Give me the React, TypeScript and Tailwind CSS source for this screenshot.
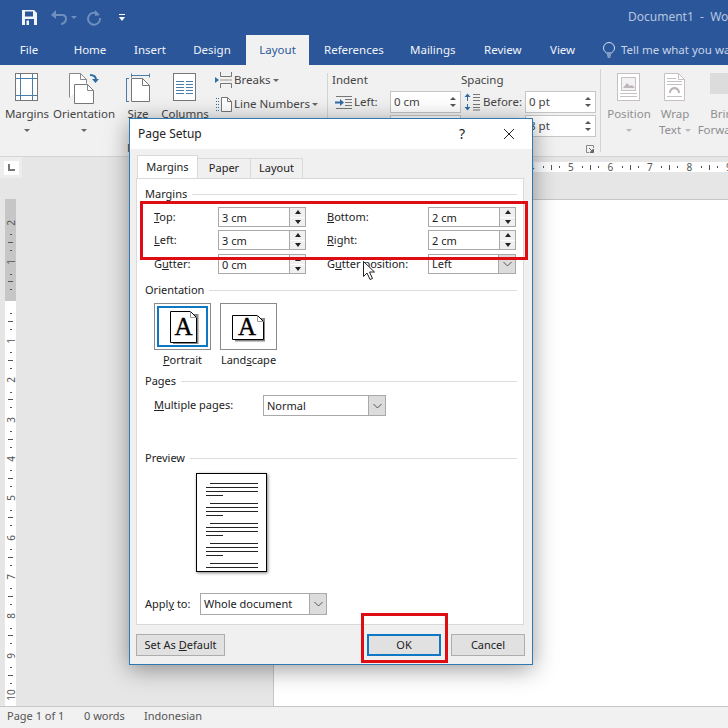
import React from "react";

const Caret = ({ className = "" }: { className?: string }) => (
  <span className={`inline-block w-0 h-0 border-x-[3px] border-x-transparent border-t-[3px] border-t-[#666] ${className}`} />
);

const RibbonButton = ({
  width,
  label,
  label2,
  disabled,
  children,
}: {
  width: string;
  label: string;
  label2?: string;
  disabled?: boolean;
  children: React.ReactNode;
}) => (
  <div className={`${width} shrink-0 flex flex-col items-center ${disabled ? "text-[#8f8f8f]" : "text-[#444]"}`}>
    <div className="h-[32px] flex items-start justify-center">{children}</div>
    <div className="h-[18px] leading-[18px] whitespace-nowrap">{label}</div>
    <div className="h-[14px] leading-[14px] whitespace-nowrap flex items-center justify-center gap-1">
      {label2}
      <Caret className={disabled ? "opacity-40" : ""} />
    </div>
  </div>
);

const MarginsIcon = () => (
  <svg width="24" height="29" viewBox="0 0 24 29" fill="none">
    <rect x="0.5" y="0.5" width="22" height="27" fill="#fff" stroke="#777" />
    <path d="M5.5 1v26M17.5 1v26M1 5.5h21M1 22.5h21" stroke="#4a7ea8" />
  </svg>
);

const OrientationIcon = () => (
  <svg width="30" height="31" viewBox="0 0 30 31" fill="none">
    <path d="M0.5 24.5v-24h11l6 6v4" stroke="#888" fill="#fff" />
    <path d="M5.5 11.5h13l6 6v13h-19z" fill="#fff" stroke="#777" />
    <path d="M18.5 11.5v6h6M11.5 .5v6h6" stroke="#888" />
    <path d="M21 2c4 0 6 2 6 5" stroke="#2f6da4" strokeWidth="2" />
    <path d="M23 6h7l-3.500 4z" fill="#2f6da4" />
  </svg>
);

const SizeIcon = () => (
  <svg width="25" height="29" viewBox="0 0 25 29" fill="none">
    <path d="M5.5 2.500h18M5.500 .5v4M23.500 .5v4M.5 5v24M0 5.500h3M0 28.500h3" stroke="#4a7ea8" />
    <path d="M5.500 5.500h11l7 7v16h-18z" fill="#fff" stroke="#777" />
    <path d="M16.500 5.500v7h7" stroke="#777" />
  </svg>
);

const ColumnsIcon = () => (
  <svg width="24" height="29" viewBox="0 0 24 29" fill="none">
    <rect x="0.5" y="0.5" width="22" height="27" fill="#fff" stroke="#777" />
    <path d="M3 8.500h8M13 8.500h7M3 11.500h8M13 11.500h7M3 14.500h8M13 14.500h7M3 17.500h8M13 17.500h7M3 20.500h8M13 20.500h7" stroke="#4a7ea8" />
  </svg>
);

const BreaksIcon = () => (
  <svg width="17" height="16" viewBox="0 0 17 16" fill="none">
    <path d="M5.500 0v4.500h11V0M5.500 16v-4.500h11V16" stroke="#777" />
    <path d="M5 8h12" stroke="#999" />
    <path d="M0 5l4 3-4 3z" fill="#2f6da4" />
  </svg>
);

const LineNumbersIcon = () => (
  <svg width="17" height="15" viewBox="0 0 17 15" fill="none">
    <path d="M1 1.500h3M1 4.500h3M1 7.500h3M1 10.500h3M1 13.500h3" stroke="#2f6da4" strokeDasharray="1 1" />
    <path d="M6.500 .5h6l4 4v10h-10z" fill="#fff" stroke="#777" />
    <path d="M12.500 .5v4h4" stroke="#777" />
  </svg>
);

const IndentIcon = () => (
  <svg width="17" height="13" viewBox="0 0 17 13" fill="none">
    <path d="M0 6.500h6" stroke="#2f6da4" strokeWidth="2" />
    <path d="M5 3l4 3.500L5 10z" fill="#2f6da4" />
    <path d="M1 .5h16M10 3.500h7M10 6.500h7M10 9.500h7M1 12.500h16" stroke="#777" />
  </svg>
);

const SpacingIcon = () => (
  <svg width="16" height="18" viewBox="0 0 16 18" fill="none">
    <path d="M3.500 3v5M3.500 11v5" stroke="#2f6da4" />
    <path d="M0.500 4l3-3.500 3 3.500zM0.500 14l3 3.500 3-3.500z" fill="#2f6da4" />
    <path d="M9 1.500h7M9 4.500h7M9 7.500h7M9 11.500h7M9 14.500h7M9 17h7" stroke="#777" />
  </svg>
);

const PositionIcon = () => (
  <svg width="24" height="28" viewBox="0 0 24 28" fill="none">
    <rect x="0.5" y="0.5" width="22" height="27" fill="#fff" stroke="#c6bfc4" />
    <rect x="4.5" y="4.5" width="14" height="13" fill="#f4f1f3" stroke="#c6bfc4" />
    <path d="M6 15l4-5 3 3 2-1 3 3z" fill="#bdb5bb" />
    <path d="M3 20.500h17M3 23.500h17" stroke="#c6bfc4" />
  </svg>
);

const WrapIcon = () => (
  <svg width="22" height="28" viewBox="0 0 22 28" fill="none">
    <path d="M.5 .5h14l6 6v21H.5z" fill="#fff" stroke="#c6bfc4" />
    <path d="M14.500 .5v6h6M3 5.500h9M3 8.500h15M3 11.500h15M3 23.500h15" stroke="#c6bfc4" />
    <path d="M5 20c0-8 11-8 11 0h-2c0-5-7-5-7 0z" fill="#bdb5bb" />
  </svg>
);

const MiniSpin = () => (
  <span className="w-[14px] flex flex-col items-center gap-[4px]">
    <span className="w-0 h-0 border-x-[3px] border-x-transparent border-b-[3px] border-b-[#555]" />
    <span className="w-0 h-0 border-x-[3px] border-x-transparent border-t-[3px] border-t-[#555]" />
  </span>
);

const RulerMark = ({ kind }: { kind: "dot" | "tick" }) => (
  <span className={kind === "dot" ? "w-px h-[2px] bg-[#555]" : "w-px h-[5px] bg-[#555]"} />
);

const HRulerCell = ({ n }: { n: number }) => (
  <div className="w-[39.5px] shrink-0 flex items-center justify-around text-[10px] leading-none text-[#555]">
    <span className="w-[9px] text-center">{n}</span>
    <RulerMark kind="dot" />
    <RulerMark kind="tick" />
    <RulerMark kind="dot" />
  </div>
);

const VRulerCell = ({ n }: { n: number | null }) => (
  <div className="h-[39.33px] shrink-0 flex flex-col items-center justify-around text-[10px] leading-none text-[#555]">
    <span className="h-[9px] flex items-center justify-center">
      {n !== null && <span className="-rotate-90 inline-block">{n}</span>}
    </span>
    <span className="h-px w-[2px] bg-[#555]" />
    <span className="h-px w-[5px] bg-[#555]" />
    <span className="h-px w-[2px] bg-[#555]" />
  </div>
);

const SectionHeading = ({ title, className = "" }: { title: string; className?: string }) => (
  <div className={`h-4 flex items-center gap-[5px] ${className}`}>
    <span className="leading-4">{title}</span>
    <span className="flex-1 border-t border-[#dcdcdc]" />
  </div>
);

const Spinner = ({ value, className = "" }: { value: string; className?: string }) => (
  <div className={`w-[88px] h-5 border border-[#a9a9a9] bg-white flex items-center ${className}`}>
    <span className="flex-1 pl-[3px] leading-none">{value}</span>
    <div className="w-4 h-full flex flex-col border-l border-[#a9a9a9] gap-px bg-white">
      <span className="flex-1 bg-[#f0f0f0] flex items-center justify-center">
        <span className="w-0 h-0 border-x-[3.5px] border-x-transparent border-b-[4px] border-b-[#222]" />
      </span>
      <span className="flex-1 bg-[#f0f0f0] flex items-center justify-center">
        <span className="w-0 h-0 border-x-[3.5px] border-x-transparent border-t-[4px] border-t-[#222]" />
      </span>
    </div>
  </div>
);

const Select = ({ value, className = "" }: { value: string; className?: string }) => (
  <div className={`border border-[#a9a9a9] bg-white flex items-center ${className}`}>
    <span className="flex-1 pl-[3px] pb-px leading-none">{value}</span>
    <span className="w-[17px] h-full bg-[#dcdcdc] border-l border-[#a9a9a9] flex items-center justify-center">
      <svg width="9" height="6" viewBox="0 0 9 6" fill="none">
        <path d="M.5 1l4 4 4-4" stroke="#555" />
      </svg>
    </span>
  </div>
);

const OrientationButton = ({ landscape, selected }: { landscape?: boolean; selected?: boolean }) => (
  <div className="w-[57px] h-[47px] border border-[#8a8a8a] bg-white flex items-center justify-center relative">
    {selected && <span className="absolute inset-[2px] border-2 border-[#0f78c4]" />}
    <svg width="34" height="34" viewBox="0 0 34 34" fill="none">
      {landscape ? (
        <>
          <path d="M3 8h30v23.500H3z" fill="#888" />
          <path d="M.5 5.500h25l6 6v18H.5z" fill="#fff" stroke="#000" />
          <path d="M25.500 5.500v6h6" stroke="#999" />
          <text x="15" y="24.500" textAnchor="middle" fontFamily="Liberation Serif, serif" fontSize="25" fill="#000" stroke="#000" strokeWidth="0.4">
            A
          </text>
        </>
      ) : (
        <>
          <path d="M7 4h25.500v30H7z" fill="#888" />
          <path d="M4.500 1.500h20l6 6v25h-26z" fill="#fff" stroke="#000" />
          <path d="M24.500 1.500v6h6" stroke="#999" />
          <text x="17.500" y="24.500" textAnchor="middle" fontFamily="Liberation Serif, serif" fontSize="25" fill="#000" stroke="#000" strokeWidth="0.4">
            A
          </text>
        </>
      )}
    </svg>
  </div>
);

const PreviewLines = () => {
  const rows: React.ReactNode[] = [];
  for (let g = 0; g < 5; g++) {
    const lines = g === 4 ? ["ml-[13px] w-12", "ml-[9px] w-[52px]"] : ["ml-[13px] w-12", "ml-[9px] w-[52px]", "ml-[9px] w-[52px]", "ml-[9px] w-[17px]"];
    rows.push(
      <div key={g} className={`flex flex-col gap-[3px] ${g === 4 ? "" : "mb-[7px]"}`}>
        {lines.map((w, i) => (
          <span key={i} className={`h-px bg-[#222] ${w}`} />
        ))}
      </div>
    );
  }
  return <>{rows}</>;
};

const PageSetupDialog = () => (
  <div className="absolute left-[129px] top-[118px] w-[404px] h-[547px] border border-[#2e79b5] bg-[#f0f0f0] shadow-[0_4px_22px_rgba(0,0,0,0.4)] flex flex-col text-[#222] text-[11px] z-10">
    <div className="h-[30px] shrink-0 bg-white flex items-center pl-2 text-[12px]">
      <span className="flex-1">Page Setup</span>
      <span className="mr-[38px] text-[14px] leading-none">?</span>
      <svg width="12" height="12" viewBox="0 0 12 12" className="mr-[17px]" fill="none">
        <path d="M1 1l10 10M11 1L1 11" stroke="#222" />
      </svg>
    </div>
    <div className="flex-1 px-[6px] pt-[7px] flex flex-col">
      <div className="flex h-[22px] items-end">
        <div className="w-[61px] h-[23px] bg-white border border-b-0 border-[#d9d9d9] flex items-center justify-center z-10 ml-px">Margins</div>
        <div className="w-[53px] h-5 bg-[#f0f0f0] border border-l-0 border-b-0 border-[#d9d9d9] flex items-center justify-center">Paper</div>
        <div className="w-[52px] h-5 bg-[#f0f0f0] border border-l-0 border-b-0 border-[#d9d9d9] flex items-center justify-center">Layout</div>
      </div>
      <div className="w-[388px] h-[447px] bg-white border border-[#d9d9d9] pl-2 pr-[6px] pt-[7px] flex flex-col">
        <SectionHeading title="Margins" />
        <div className="ml-[9px] mt-[5px] flex items-center">
          <span className="w-16"><u>T</u>op:</span>
          <Spinner value="3 cm" />
          <span className="w-[122px] pl-[21px]"><u>B</u>ottom:</span>
          <Spinner value="2 cm" />
        </div>
        <div className="ml-[9px] mt-[3px] flex items-center">
          <span className="w-16"><u>L</u>eft:</span>
          <Spinner value="3 cm" />
          <span className="w-[122px] pl-[21px]"><u>R</u>ight:</span>
          <Spinner value="2 cm" />
        </div>
        <div className="ml-[9px] mt-1 flex items-center">
          <span className="w-16">G<u>u</u>tter:</span>
          <Spinner value="0 cm" />
          <span className="w-[122px] pl-[21px] whitespace-nowrap">G<u>u</u>tter position:</span>
          <Select value="Left" className="w-[88px] h-5" />
        </div>
        <SectionHeading title="Orientation" className="mt-2" />
        <div className="ml-[9px] mt-[5px] flex gap-[9px]">
          <OrientationButton selected />
          <OrientationButton landscape />
        </div>
        <div className="ml-[9px] mt-[2px] flex gap-[9px] h-4 leading-4">
          <span className="w-[57px] text-center"><u>P</u>ortrait</span>
          <span className="w-[57px] text-center whitespace-nowrap">Land<u>s</u>cape</span>
        </div>
        <SectionHeading title="Pages" className="mt-[5px]" />
        <div className="ml-[9px] mt-[6px] flex items-center">
          <span className="w-[109px]"><u>M</u>ultiple pages:</span>
          <Select value="Normal" className="w-[123px] h-[21px]" />
        </div>
        <SectionHeading title="Preview" className="mt-[34px]" />
        <div className="ml-[51px] mt-[7px] w-[71px] h-[99px] shrink-0 border border-black bg-white pt-[9px] shadow-[1px_1px_3px_rgba(0,0,0,0.5)]">
          <PreviewLines />
        </div>
        <div className="mt-[21px] flex items-center">
          <span className="w-[55px] whitespace-nowrap">Appl<u>y</u> to:</span>
          <Select value="Whole document" className="w-[127px] h-[22px]" />
        </div>
      </div>
      <div className="mt-[9px] flex items-center h-[22px] w-[389px]">
        <div className="w-[89px] h-[22px] bg-[#e1e1e1] border border-[#adadad] flex items-center justify-center whitespace-nowrap">
          Set As&nbsp;<u>D</u>efault
        </div>
        <div className="flex-1" />
        <div className="w-[74px] h-[22px] bg-[#e1e1e1] border-2 border-[#0f78c4] flex items-center justify-center">OK</div>
        <div className="w-[74px] h-[22px] ml-[10px] bg-[#e1e1e1] border border-[#adadad] flex items-center justify-center">Cancel</div>
      </div>
    </div>
  </div>
);

export default function App() {
  const leftRuler: (number | null)[] = [2, 1, null, 1, 2, 3, 4, 5, 6, 7, 8, 9, 10];
  return (
    <div className="relative w-[728px] h-[728px] overflow-hidden flex flex-col font-['Noto_Sans',sans-serif] text-[12px] bg-[#e6e6e6]">
      {/* title bar */}
      <div className="h-[35px] shrink-0 bg-[#2b579a] flex items-center pl-[22px]">
        <svg width="15" height="15" viewBox="0 0 15 15" fill="none" className="shrink-0">
          <path d="M0 0h12l3 3v12H0z" fill="#f1f4f9" />
          <rect x="3" y="1.5" width="8" height="5" fill="#2b579a" />
          <rect x="3" y="9" width="9" height="6" fill="#2b579a" />
          <rect x="4.5" y="10.5" width="2.5" height="4.5" fill="#f1f4f9" />
        </svg>
        <svg width="19" height="15" viewBox="0 0 19 15" fill="none" className="ml-[14px] shrink-0">
          <path d="M4 5h7c3 0 4 2 4 4s-2 5-5 5" stroke="#6f8fbd" strokeWidth="2" />
          <path d="M5 0v9L0 5z" fill="#6f8fbd" />
        </svg>
        <span className="ml-[1px] w-0 h-0 shrink-0 border-x-[3px] border-x-transparent border-t-[3px] border-t-[#6f8fbd]" />
        <svg width="15" height="16" viewBox="0 0 15 16" fill="none" className="ml-[10px] shrink-0">
          <path d="M10 3.500A6 6 0 1 0 13 8" stroke="#6f8fbd" strokeWidth="2" />
          <path d="M8 0v6l5-1z" fill="#6f8fbd" />
        </svg>
        <span className="ml-[16px] w-[7px] shrink-0 flex flex-col items-center gap-[2px]">
          <span className="w-[6px] h-px bg-white" />
          <span className="w-0 h-0 border-x-[3.5px] border-x-transparent border-t-[4px] border-t-white" />
        </span>
        <span className="ml-[503px] shrink-0 whitespace-nowrap text-[#b5c5df] text-[12px] -translate-y-px">Document1&nbsp; -&nbsp; Word</span>
      </div>

      {/* tabs */}
      <div className="h-[30px] shrink-0 bg-[#2b579a] flex items-center text-[11.5px] text-[#f1f4f9] whitespace-nowrap">
        <span className="w-[58px] shrink-0 text-center">File</span>
        <span className="w-[64px] shrink-0 text-center">Home</span>
        <span className="w-[56px] shrink-0 text-center">Insert</span>
        <span className="w-[68px] shrink-0 text-center">Design</span>
        <span className="w-[63px] shrink-0 h-full flex items-center justify-center bg-[#f1f1f1] text-[#2b579a]">Layout</span>
        <span className="ml-[15px] w-[57px] shrink-0 text-center">References</span>
        <span className="ml-[29px] w-[45px] shrink-0 text-center">Mailings</span>
        <span className="ml-[29px] w-[37px] shrink-0 text-center">Review</span>
        <span className="ml-[29px] w-[25px] shrink-0 text-center">View</span>
        <svg width="12" height="17" viewBox="0 0 12 17" fill="none" className="ml-[28px] shrink-0">
          <path d="M3.500 11C1 9 .5 7.500 .5 6a5.500 5.500 0 0 1 11 0c0 1.500-.5 3-3 5zM4 13h4M4.500 15h3" stroke="#d5deec" />
        </svg>
        <span className="ml-[6px] shrink-0 text-[#c9d5e8]">Tell me what you want to do</span>
      </div>

      {/* ribbon */}
      <div className="relative h-[92px] shrink-0 bg-[#f1f1f1] border-b border-[#d4d4d4] flex pt-[8px] text-[#444] text-[11.5px] overflow-hidden">
        <span className="absolute left-[127px] top-[75px] leading-4 whitespace-nowrap">Page Setup</span>
        <RibbonButton width="w-[50px] ml-[2px]" label="Margins"><MarginsIcon /></RibbonButton>
        <RibbonButton width="w-[62px] ml-[1px]" label="Orientation"><OrientationIcon /></RibbonButton>
        <RibbonButton width="w-[46px]" label="Size"><SizeIcon /></RibbonButton>
        <RibbonButton width="w-[48px]" label="Columns"><ColumnsIcon /></RibbonButton>
        <div className="w-[118px] shrink-0 pl-[6px] -mt-px flex flex-col gap-2">
          <div className="flex items-center gap-[2px] h-4"><BreaksIcon /> Breaks <Caret /></div>
          <div className="flex items-center gap-[2px] h-4 whitespace-nowrap"><LineNumbersIcon /> Line Numbers <Caret /></div>
        </div>
        <div className="w-px h-[70px] bg-[#d4d4d4] mr-[4px] shrink-0" />
        <div className="w-[129px] shrink-0">
          <div className="leading-4 h-4 -mt-px">Indent</div>
          <div className="mt-[3px] flex items-center pl-[3px]">
            <IndentIcon />
            <span className="ml-[2px] w-[36px]">Left:</span>
            <div className="w-[71px] h-[22px] border border-[#c6c6c6] bg-white flex items-center pl-[3px]">
              <span className="flex-1">0 cm</span>
              <MiniSpin />
            </div>
          </div>
          <div className="mt-[2px] ml-[58px] w-[71px] h-[22px] border border-[#c6c6c6] bg-white" />
        </div>
        <div className="w-[139px] shrink-0">
          <div className="leading-4 h-4 -mt-px">Spacing</div>
          <div className="mt-[3px] flex items-center pl-[3px]">
            <SpacingIcon />
            <span className="ml-[3px] w-[42px]">Before:</span>
            <div className="w-[71px] h-[22px] border border-[#c6c6c6] bg-white flex items-center pl-[3px]">
              <span className="flex-1">0 pt</span>
              <MiniSpin />
            </div>
          </div>
          <div className="mt-[2px] ml-[64px] w-[71px] h-[22px] border border-[#c6c6c6] bg-white flex items-center pl-[3px]">
            <span className="flex-1">8 pt</span>
            <MiniSpin />
          </div>
          <svg width="8" height="8" viewBox="0 0 8 8" fill="none" className="mt-[8px] ml-[125px]">
            <path d="M7.500 3V.5H.5v7H3" stroke="#888" />
            <path d="M3 3l3.500 3.500M7.500 4v3.500H4z" stroke="#666" fill="#666" />
          </svg>
        </div>
        <div className="w-px h-[83px] -mt-[4px] bg-[#d4d4d4] mr-[6px] shrink-0" />
        <RibbonButton width="w-[44px]" label="Position" disabled><PositionIcon /></RibbonButton>
        <RibbonButton width="w-[48px]" label="Wrap" label2="Text" disabled><WrapIcon /></RibbonButton>
        <RibbonButton width="w-[52px]" label="Bring" label2="Forward" disabled>
          <div className="w-[30px] h-[21px] bg-[#dcdcdc]" />
        </RibbonButton>
      </div>

      {/* ruler row */}
      <div className="h-[42px] shrink-0 flex">
        <div className="w-[274px] shrink-0">
          <div className="w-[22px] h-[21px] bg-[#ededed] flex items-center justify-center">
            <div className="w-[15px] h-[14px] bg-white flex items-center justify-center">
              <svg width="7" height="7" viewBox="0 0 7 7">
                <path d="M0 0h2v5h5v2H0z" fill="#777" />
              </svg>
            </div>
          </div>
        </div>
        <div className="flex-1 mt-[5px] h-[10px] bg-white flex pl-[131px] overflow-hidden">
          {[1, 2, 3, 4, 5, 6, 7, 8, 9].map((n) => (
            <HRulerCell key={n} n={n} />
          ))}
        </div>
      </div>

      {/* document area */}
      <div className="flex-1 flex min-h-0">
        <div className="w-[274px] shrink-0 border-r border-[#c6c6c6] pl-[5px]">
          <div className="w-[11px] h-full overflow-hidden pt-[16px] bg-[linear-gradient(#c6c6c6_102px,#fff_102px)]">
            {leftRuler.map((n, i) => (
              <VRulerCell key={i} n={n} />
            ))}
          </div>
        </div>
        <div className="flex-1 bg-white border-t border-[#c6c6c6]" />
      </div>

      {/* status bar */}
      <div className="h-[22px] shrink-0 bg-[#f1f1f1] border-t border-[#c6c6c6] flex items-center pl-[7px] pb-[2px] text-[11px] text-[#555]">
        <span className="w-[77px]">Page 1 of 1</span>
        <span className="w-[60px]">0 words</span>
        <span>Indonesian</span>
      </div>

      <PageSetupDialog />

      {/* red annotation boxes */}
      <div className="absolute left-[140px] top-[201px] w-[388px] h-[59px] border-[3px] border-[#e00c14] z-20" />
      <div className="absolute left-[361px] top-[613px] w-[87px] h-[50px] border-[3px] border-[#e00c14] z-20" />

      {/* mouse cursor */}
      <svg width="13" height="20" viewBox="0 0 13 20" className="absolute left-[363px] top-[261px] z-30" fill="none">
        <path d="M.5 .5v15l3.500-3.500 3 6.500 2.500-1-3-6.500h5z" fill="#fff" stroke="#222" />
      </svg>
    </div>
  );
}
